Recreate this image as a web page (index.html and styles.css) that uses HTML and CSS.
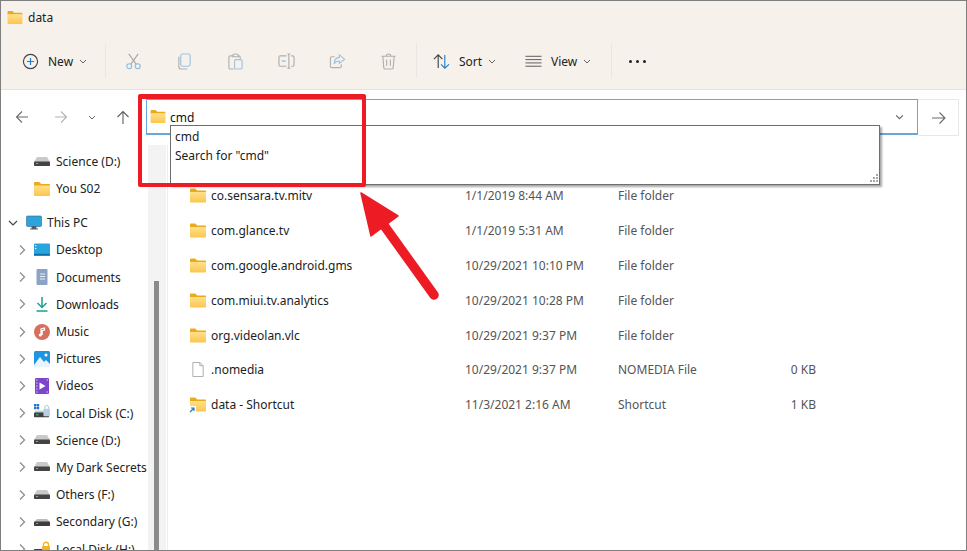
FILE: index.html
```html
<!DOCTYPE html>
<html lang="en">
<head>
<meta charset="utf-8">
<title>data</title>
<link rel="stylesheet" href="styles.css">
</head>
<body>
<svg class="defs" width="0" height="0">
  <defs>
    <linearGradient id="fg" x1="0" y1="0" x2="0" y2="1"><stop offset="0" stop-color="#ffe08a"/><stop offset="1" stop-color="#fcc64e"/></linearGradient>
    <symbol id="folder" viewBox="0 0 16 14">
      <path d="M0 1.2C0 .6.5 0 1 0h4.2l2 2H15c.6 0 1 .4 1 1v1H0z" fill="#eba91c"/>
      <path d="M0 3.6h16V13c0 .6-.4 1-1 1H1c-.6 0-1-.4-1-1z" fill="url(#fg)"/>
    </symbol>
    <symbol id="drive" viewBox="0 0 16 10">
      <path d="M3 0h10l3 5H0z" fill="#c9c9c9"/>
      <rect x="0" y="4.5" width="16" height="4.5" rx=".8" fill="#444"/>
      <rect x="2" y="6" width="2" height="1" fill="#999"/>
    </symbol>
    <symbol id="drive2" viewBox="0 0 16 10">
      <path d="M3 2h10l3 3H0z" fill="#bbb"/>
      <rect x="0" y="4.5" width="16" height="4.5" rx=".8" fill="#3d3d3d"/>
      <rect x="2" y="6" width="2" height="1" fill="#3fc5a0"/>
    </symbol>
    <symbol id="chev-r" viewBox="0 0 8 12"><path d="M2 1.5 6.500 6 2 10.500" fill="none" stroke="#8f8f8f" stroke-width="1.300"/></symbol>
    <symbol id="chev-d" viewBox="0 0 8 5"><path d="M1 1l3 3 3-3" fill="none" stroke="#666" stroke-width="1"/></symbol>
  </defs>
</svg>

<div class="window">
  <header class="title">
    <svg class="ic-title"><use href="#folder"/></svg>
    <span>data</span>
  </header>

  <div class="toolbar">
    <div class="tool tool-new">
      <svg class="ic18" viewBox="0 0 18 18"><circle cx="9" cy="9" r="7.500" fill="none" stroke="#444" stroke-width="1.200"/><path d="M9 5.200v7.600M5.200 9h7.600" stroke="#1f7fd0" stroke-width="1.300"/></svg>
      <span>New</span>
      <svg class="chev"><use href="#chev-d"/></svg>
    </div>
    <div class="sep sep-a"></div>
    <div class="tool tool-icon">
      <svg class="ic18" viewBox="0 0 18 18" fill="none" stroke-width="1.200"><path d="M4 1l8 11M14 1L6 12" stroke="#a8a8a8"/><circle cx="4.500" cy="14" r="2.600" stroke="#8dbbe2"/><circle cx="13.500" cy="14" r="2.600" stroke="#8dbbe2"/></svg>
    </div>
    <div class="tool tool-icon">
      <svg class="ic18" viewBox="0 0 18 18" fill="none" stroke-width="1.200"><rect x="5" y="1" width="10" height="13" rx="2" stroke="#9cc3e4"/><path d="M3 4v10.500c0 1.200 1 2.500 2.500 2.500H12" stroke="#b0b0b0"/></svg>
    </div>
    <div class="tool tool-icon">
      <svg class="ic18" viewBox="0 0 18 18" fill="none" stroke-width="1.200"><path d="M7 3H3.500C2.500 3 2 3.600 2 4.500v11c0 1 .5 1.500 1.500 1.500H7M6 3c0-1 1-2 3-2s3 1 3 2v1H6zM12 3h.5c1 0 1.500.5 1.500 1.500V6" stroke="#b0b0b0"/><rect x="8" y="7" width="8" height="10" rx="1.500" stroke="#9cc3e4"/></svg>
    </div>
    <div class="tool tool-icon">
      <svg class="ic18" viewBox="0 0 18 18" fill="none" stroke-width="1.200"><path d="M9 3H2.500C1.500 3 1 3.600 1 4.500v8c0 1 .5 1.500 1.500 1.500H9M14 3h1.500c1 0 1.500.6 1.500 1.500v8c0 1-.5 1.500-1.500 1.500H14M10 1h3M10 16h3M11.500 1v15" stroke="#adadad"/><path d="M4 8.500h4" stroke="#8dbbe2" stroke-width="1.400"/></svg>
    </div>
    <div class="tool tool-icon">
      <svg class="ic18" viewBox="0 0 18 18" fill="none" stroke-width="1.200"><path d="M6 4H3C2 4 1.500 4.500 1.500 5.500V14c0 1 .5 1.500 1.500 1.500h8.500c1 0 1.500-.5 1.500-1.500v-2" stroke="#b0b0b0"/><path d="M11 2l5.500 4.500L11 11V8.500c-2.500 0-4.500 1-5.500 3 0-4 2-6.500 5.500-6.800z" stroke="#9cc3e4"/></svg>
    </div>
    <div class="tool tool-icon">
      <svg class="ic18" viewBox="0 0 18 18" fill="none" stroke="#b0b0b0" stroke-width="1.200"><path d="M1.500 3.500h15M6.500 3.500C6.500 2 7.500 1 9 1s2.500 1 2.500 2.500M3 3.500l1 12c.1 1 .7 1.500 1.500 1.500h7c.8 0 1.400-.5 1.500-1.500l1-12M7 7v6.500M11 7v6.500"/></svg>
    </div>
    <div class="sep sep-b"></div>
    <div class="tool tool-sort">
      <svg class="ic18" viewBox="0 0 18 18" fill="none" stroke-width="1.200"><path d="M5.500 16V2M1 6.500 5.500 2 10 6.500" stroke="#444"/><path d="M12.500 2v14M8.500 12l4 4 4.500-4" stroke="#1f7fd0"/></svg>
      <span>Sort</span>
      <svg class="chev"><use href="#chev-d"/></svg>
    </div>
    <div class="tool tool-view">
      <svg class="ic18" viewBox="0 0 18 18" fill="none" stroke="#555" stroke-width="1"><path d="M.5 3.500h17M.5 7h17M.5 10.500h17M.5 14h17"/></svg>
      <span>View</span>
      <svg class="chev"><use href="#chev-d"/></svg>
    </div>
    <div class="sep sep-c"></div>
    <div class="more"><i></i><i></i><i></i></div>
  </div>

  <nav class="navbar">
    <svg class="nav-ic nav-back" viewBox="0 0 14 14" fill="none" stroke="#6b6b6b" stroke-width="1.100"><path d="M13 7H1.500M7 1.500 1.500 7 7 12.500"/></svg>
    <svg class="nav-ic nav-fwd" viewBox="0 0 14 14" fill="none" stroke="#b3b3b3" stroke-width="1.100"><path d="M1 7h11.500M7 1.500 12.500 7 7 12.500"/></svg>
    <svg class="nav-chev"><use href="#chev-d"/></svg>
    <svg class="nav-ic nav-up" viewBox="0 0 14 14" fill="none" stroke="#5f5f5f" stroke-width="1.100"><path d="M7 14V1.500M1.500 7 7 1.500 12.500 7"/></svg>
    <div class="address">
      <svg class="ic-addr"><use href="#folder"/></svg>
      <span class="addr-text">cmd</span>
      <svg class="addr-chev"><use href="#chev-d"/></svg>
    </div>
    <div class="go">
      <svg class="go-ic" viewBox="0 0 14 14" fill="none" stroke="#6b6b6b" stroke-width="1.100"><path d="M0 7h13M7.500 1.500 13 7l-5.500 5.500"/></svg>
    </div>
  </nav>

  <div class="main">
    <aside class="sidebar">
      <div class="row lvl1"><span></span><svg class="ic-drive"><use href="#drive"/></svg><span>Science (D:)</span></div>
      <div class="row lvl1"><span></span><svg class="ic-16"><use href="#folder"/></svg><span>You S02</span></div>
      <div class="row lvl0">
        <svg class="exp-d" viewBox="0 0 10 6"><path d="M1 1l4 4 4-4" fill="none" stroke="#444" stroke-width="1.200"/></svg>
        <svg class="ic-16" viewBox="0 0 16 15"><rect x=".5" y=".5" width="15" height="10.500" rx="1" fill="#2aa4dc" stroke="#39648a" stroke-width=".6"/><path d="M6 11h4v2H6zM4 13.500h8" stroke="#4a5f70" fill="#4a5f70"/></svg>
        <span>This PC</span>
      </div>
      <div class="row lvl1">
        <svg class="exp"><use href="#chev-r"/></svg>
        <svg class="ic-16" viewBox="0 0 17 14"><rect width="17" height="13" rx="1" fill="#27a6de"/><rect y="11" width="17" height="2" fill="#0e6fa8"/><path d="M1 2h1.500v1H1zM1 5h1.500v1H1z" fill="#fff"/></svg>
        <span>Desktop</span>
      </div>
      <div class="row lvl1">
        <svg class="exp"><use href="#chev-r"/></svg>
        <svg class="ic-16" viewBox="0 0 16 16"><rect x="2.500" width="11" height="16" rx="1" fill="#8ba3c7"/><path d="M6 5h5M6 7.500h5M6 10h5" stroke="#e9eef5" stroke-width="1"/></svg>
        <span>Documents</span>
      </div>
      <div class="row lvl1">
        <svg class="exp"><use href="#chev-r"/></svg>
        <svg class="ic-16" viewBox="0 0 16 16" fill="none" stroke="#1e9e8f" stroke-width="1.500"><path d="M8 1v10M3.500 7 8 11.500 12.500 7M2.500 15h11"/></svg>
        <span>Downloads</span>
      </div>
      <div class="row lvl1">
        <svg class="exp"><use href="#chev-r"/></svg>
        <svg class="ic-16" viewBox="0 0 16 16"><circle cx="8" cy="8" r="8" fill="#d86f5e"/><path d="M7 11V5l3.500-1v2L8.200 6.700V11" stroke="#fff" fill="none" stroke-width="1.200"/><circle cx="6.300" cy="11" r="1.500" fill="#fff"/></svg>
        <span>Music</span>
      </div>
      <div class="row lvl1">
        <svg class="exp"><use href="#chev-r"/></svg>
        <svg class="ic-16" viewBox="0 0 16 16"><rect width="16" height="16" rx="1.500" fill="#1f94e0"/><path d="M0 14 6 6l4 5 2-2 4 4v3H0z" fill="#e8f5ff"/><circle cx="12" cy="4" r="1.500" fill="#fff"/></svg>
        <span>Pictures</span>
      </div>
      <div class="row lvl1">
        <svg class="exp"><use href="#chev-r"/></svg>
        <svg class="ic-16" viewBox="0 0 16 16"><rect x="1" width="14" height="16" rx="1" fill="#7c46c9"/><path d="M5.500 4.500v7l6-3.500z" fill="#fff"/><path d="M2 2h1.500M2 5h1.500M2 8h1.500M2 11h1.500M2 14h1.500M12.500 2H14M12.500 14H14" stroke="#d9c6f2"/></svg>
        <span>Videos</span>
      </div>
      <div class="row lvl1">
        <svg class="exp"><use href="#chev-r"/></svg>
        <svg class="ic-16 ic-tall" viewBox="0 0 17 17"><path d="M0 0h2.500v2.500H0zM3 0h2.500v2.500H3zM0 3h2.500v2.500H0zM3 3h2.500v2.500H3z" fill="#1c74c4"/><path d="M1 7h15v3H1z" fill="#ccc"/><rect y="9" width="16" height="5" rx=".8" fill="#3f3f3f"/><rect x="2" y="11" width="3" height="1" fill="#3fc5a0"/><rect x="10" y="5" width="7" height="8" rx="1" fill="#b9cfe3"/><path d="M11.500 5V3.500c0-2.500 4-2.500 4 0V5" fill="none" stroke="#9db8d0"/></svg>
        <span>Local Disk (C:)</span>
      </div>
      <div class="row lvl1"><svg class="exp"><use href="#chev-r"/></svg><svg class="ic-drive"><use href="#drive"/></svg><span>Science (D:)</span></div>
      <div class="row lvl1"><svg class="exp"><use href="#chev-r"/></svg><svg class="ic-drive"><use href="#drive"/></svg><span>My Dark Secrets</span></div>
      <div class="row lvl1"><svg class="exp"><use href="#chev-r"/></svg><svg class="ic-drive"><use href="#drive"/></svg><span>Others (F:)</span></div>
      <div class="row lvl1"><svg class="exp"><use href="#chev-r"/></svg><svg class="ic-drive"><use href="#drive2"/></svg><span>Secondary (G:)</span></div>
      <div class="row lvl1">
        <svg class="exp"><use href="#chev-r"/></svg>
        <svg class="ic-16" viewBox="0 0 16 16"><rect y="8" width="12" height="6" rx=".8" fill="#3f3f3f"/><rect x="8" y="5" width="8" height="8" rx="1" fill="#f4b324"/><path d="M9.500 5V3.500c0-3 5-3 5 0V5" fill="none" stroke="#f4b324" stroke-width="1.300"/></svg>
        <span>Local Disk (H:)</span>
      </div>
    </aside>

    <div class="scrollbar"><div class="thumb"></div></div>

    <section class="files">
      <div class="file"><svg class="ic-16"><use href="#folder"/></svg><span class="name">co.sensara.tv.mitv</span><span>1/1/2019 8:44 AM</span><span>File folder</span><span class="size"></span></div>
      <div class="file"><svg class="ic-16"><use href="#folder"/></svg><span class="name">com.glance.tv</span><span>1/1/2019 5:31 AM</span><span>File folder</span><span class="size"></span></div>
      <div class="file"><svg class="ic-16"><use href="#folder"/></svg><span class="name">com.google.android.gms</span><span>10/29/2021 10:10 PM</span><span>File folder</span><span class="size"></span></div>
      <div class="file"><svg class="ic-16"><use href="#folder"/></svg><span class="name">com.miui.tv.analytics</span><span>10/29/2021 10:28 PM</span><span>File folder</span><span class="size"></span></div>
      <div class="file"><svg class="ic-16"><use href="#folder"/></svg><span class="name">org.videolan.vlc</span><span>10/29/2021 9:37 PM</span><span>File folder</span><span class="size"></span></div>
      <div class="file">
        <svg class="ic-16" viewBox="0 0 16 16"><path d="M2.500.5H10L13.500 4v11.500h-11z" fill="#fff" stroke="#aaa"/><path d="M10 .5V4h3.500" fill="none" stroke="#aaa"/></svg>
        <span class="name">.nomedia</span><span>10/29/2021 9:37 PM</span><span>NOMEDIA File</span><span class="size">0 KB</span>
      </div>
      <div class="file">
        <span class="shortcut">
          <svg class="ic-16"><use href="#folder"/></svg>
          <svg class="badge" viewBox="0 0 8 8"><rect width="8" height="8" fill="#fff"/><path d="M2 6l4-4M3 2h3v3" fill="none" stroke="#1f7fd0" stroke-width="1.200"/></svg>
        </span>
        <span class="name">data - Shortcut</span><span>11/3/2021 2:16 AM</span><span>Shortcut</span><span class="size">1 KB</span>
      </div>
    </section>
  </div>

  <div class="suggest">
    <div class="sug-row">cmd</div>
    <div class="sug-row">Search for "cmd"</div>
    <svg class="grip" viewBox="0 0 9 9" fill="#a8a8a8"><path d="M7 0h2v2H7zM4 3h2v2H4zM7 3h2v2H7zM1 6h2v2H1zM4 6h2v2H4zM7 6h2v2H7z"/></svg>
  </div>
  <div class="redbox"></div>
  <svg class="arrow" viewBox="0 0 100 120" width="100" height="120">
    <path d="M12 3 49 26 22 46z" fill="#ed1c24" stroke="#ed1c24" stroke-width="1.500" stroke-linejoin="round"/>
    <path d="M34 34 85 105" fill="none" stroke="#ed1c24" stroke-width="9.500" stroke-linecap="round"/>
  </svg>
</div>
</body>
</html>
```

FILE: styles.css
```css
* { box-sizing: border-box; }
html, body { margin: 0; padding: 0; background: #fff; }
body { width: 967px; height: 551px; overflow: hidden; font-family: "Noto Sans", "Open Sans", sans-serif; font-size: 12px; color: #222; }
.defs { position: absolute; }
svg { display: block; flex: none; }

.window { position: relative; width: 967px; height: 551px; border: 1px solid #7f7f7f; display: flex; flex-direction: column; overflow: hidden; background: #fff; }

.title { height: 32px; background: #f7f1ec; display: flex; align-items: center; gap: 5px; padding: 0 0 0 6px; }
.ic-title { width: 16px; height: 13px; }

.toolbar { height: 57px; background: #f7f1ec; border-bottom: 1px solid #e6e2de; display: flex; align-items: center; padding: 0 0 0 21px; }
.tool { display: flex; align-items: center; height: 33px; }
.ic18 { width: 17px; height: 17px; }
.chev { width: 8px; height: 5px; margin-left: 6px; }
.tool-new { width: 83px; }
.tool-new span { margin-left: 9px; }
.tool-icon { width: 51px; justify-content: center; }
.tool-sort { width: 78px; margin-left: 16px; }
.tool-sort span { margin-left: 9px; }
.tool-view { width: 67px; margin-left: 14px; }
.tool-view span { margin-left: 9px; }
.sep { width: 1px; height: 34px; background: #ebe6e1; }
.sep-a { margin-right: 2px; }
.sep-b { margin-left: 2px; }
.sep-c { margin-left: 19px; }
.more { display: flex; gap: 4px; margin-left: 17px; }
.more i { width: 3px; height: 3px; border-radius: 50%; background: #222; }

.navbar { height: 55px; display: flex; align-items: flex-start; padding: 9px 0 0 0; }
.nav-ic { width: 14px; height: 14px; margin-top: 11px; }
.nav-back { margin-left: 14px; }
.nav-fwd { margin-left: 25px; }
.nav-chev { width: 8px; height: 5px; margin: 16px 0 0 20px; }
.nav-up { margin-left: 20px; }
.address { width: 772px; height: 36px; margin-left: 16px; border: 1px solid #66a8dc; border-bottom-width: 2px; display: flex; align-items: center; padding: 0 13px 0 3px; }
.ic-addr { width: 16px; height: 13px; }
.addr-text { margin-left: 4px; flex: 1; color: #111; position: relative; top: 1px; }
.addr-chev { width: 9px; height: 6px; }
.go { width: 41px; height: 37px; border: 1px solid #e8e8e8; border-left: 0; display: flex; align-items: center; justify-content: center; padding-left: 1px; }
.go-ic { width: 14px; height: 14px; }

.main { flex: 1; display: flex; min-height: 0; }

.sidebar { width: 147px; padding-top: 3px; flex: none; overflow: hidden; }
.row { height: 27.200px; display: grid; align-items: center; white-space: nowrap; }
.lvl1 { grid-template-columns: 33px 22px 1fr; }
.lvl0 { grid-template-columns: 25px 21px 1fr; margin-top: 6.800px; }
.exp { width: 8px; height: 12px; margin-left: 17px; }
.exp-d { width: 10px; height: 6px; margin-left: 7px; }
.ic-16 { width: 16px; height: 16px; }
.ic-tall { margin-top: -2px; }
.ic-drive { width: 16px; height: 10px; }

.scrollbar { width: 18px; background: #f3f3f3; position: relative; flex: none; }
.thumb { position: absolute; left: 6px; top: 136px; bottom: 0; width: 5px; background: #8b8b8b; }

.files { flex: 1; border-left: 1px solid #eee; margin-left: 1px; padding: 33px 0 0 22px; }
.file { height: 34.900px; display: grid; grid-template-columns: 21px 254px 153px 130px 68px; align-items: center; color: #555; white-space: nowrap; }
.file .name { color: #1c1c1c; }
.file .ic-16 { height: 15px; }
.size { text-align: right; }
.shortcut { position: relative; display: block; width: 16px; }
.badge { position: absolute; left: -2px; bottom: -2px; width: 8px; height: 8px; }

.suggest { position: absolute; left: 169px; top: 124px; width: 710px; height: 60px; background: #fff; border: 1px solid #6e6e6e; box-shadow: 2px 2px 2px rgba(0,0,0,.35); padding: 1px 0 0 4px; }
.sug-row { height: 19px; line-height: 19px; color: #1c1c1c; }
.grip { position: absolute; right: 1px; bottom: 1px; width: 9px; height: 9px; }

.redbox { position: absolute; left: 137px; top: 93px; width: 228px; height: 93px; border: 4px solid #ed1c24; border-top-width: 5px; border-radius: 2px; }
.arrow { position: absolute; left: 348px; top: 189px; }
```
